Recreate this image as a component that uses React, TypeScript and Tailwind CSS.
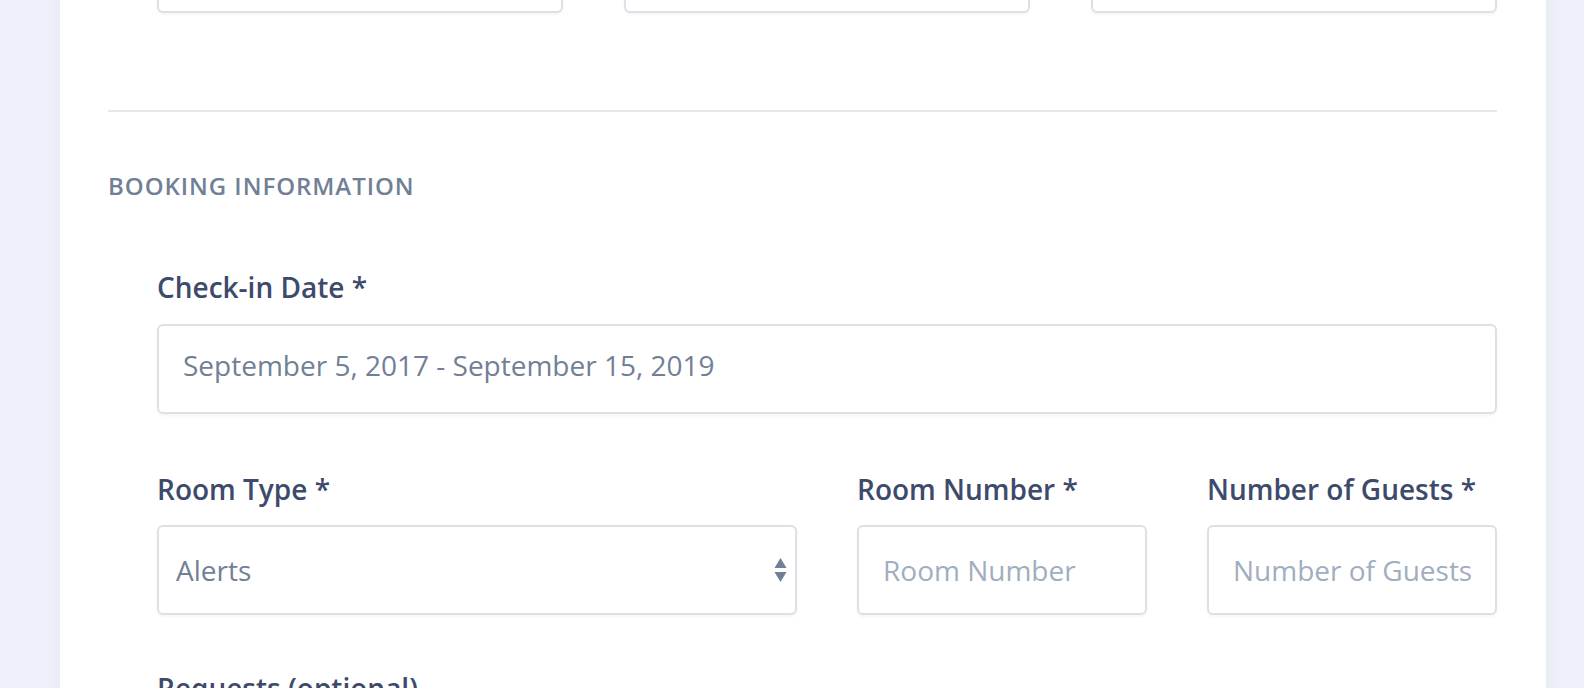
const Label = ({ children }: { children: React.ReactNode }) => (
  <label className="block text-[28px] leading-9 font-semibold text-[#3d4a6b]">{children}</label>
);

const inputCls =
  "w-full h-[90px] rounded-md border-2 border-[#dde1e7] bg-white px-6 text-[28px] text-[#718096] shadow-[0_2px_3px_rgba(0,0,0,0.04)] outline-none placeholder:text-[#a0aec0]";

export default function App() {
  return (
    <div className="h-[688px] overflow-hidden bg-[#eef0f9] pl-[60px] pr-[38px] font-['Open_Sans',sans-serif]">
      <div className="min-h-[800px] bg-white pl-12 pr-[49px] shadow-[0_0_14px_rgba(60,70,140,0.05)]">
        {/* previous section, mostly scrolled out of view */}
        <div className="-mt-[77px] grid grid-cols-3 gap-[61px] pl-[49px]">
          <div className={inputCls} />
          <div className={inputCls} />
          <div className={inputCls} />
        </div>

        <hr className="mt-[97px] border-t-2 border-[#e5e7eb]" />

        <h3 className="mt-[58px] text-[24px] leading-8 font-semibold uppercase tracking-[0.04em] text-[#718096]">
          Booking Information
        </h3>

        <div className="pl-[49px]">
          <div className="mt-[67px]">
            <Label>Check-in Date *</Label>
            <input
              className={inputCls + " mt-[19px] pb-2"}
              defaultValue="September 5, 2017 - September 15, 2019"
            />
          </div>

          <div className="mt-[57px] grid grid-cols-[640px_1fr_1fr] gap-[60px]">
            <div>
              <Label>Room Type *</Label>
              <div className="relative mt-[18px]">
                <select className={inputCls + " appearance-none pl-[17px]"} defaultValue="Alerts">
                  <option>Alerts</option>
                  <option>Standard</option>
                  <option>Deluxe</option>
                </select>
                <svg
                  className="pointer-events-none absolute right-[10px] top-1/2 -translate-y-1/2"
                  width="13"
                  height="26"
                  viewBox="0 0 13 26"
                >
                  <path d="M6.5 1 L12.5 11 L0.5 11 Z" fill="#718096" />
                  <path d="M0.5 15 L12.5 15 L6.5 25 Z" fill="#718096" />
                </svg>
              </div>
            </div>
            <div>
              <Label>Room Number *</Label>
              <input className={inputCls + " mt-[18px]"} placeholder="Room Number" />
            </div>
            <div>
              <Label>Number of Guests *</Label>
              <input className={inputCls + " mt-[18px]"} placeholder="Number of Guests" />
            </div>
          </div>

          <div className="mt-[55px]">
            <Label>Requests (optional)</Label>
          </div>
        </div>
      </div>
    </div>
  );
}
